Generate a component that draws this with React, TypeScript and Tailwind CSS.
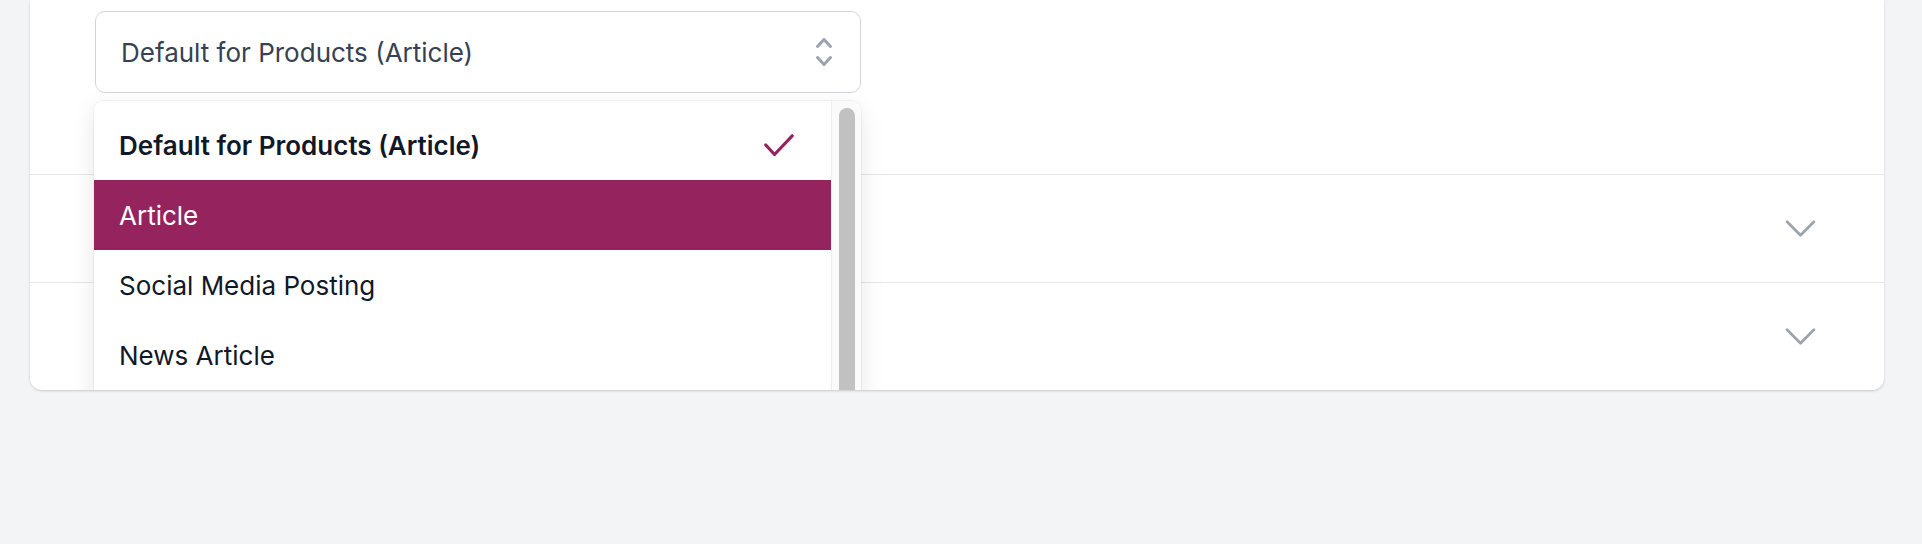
import React from "react";

const options = [
    { name: "Default for Products (Article)", selected: true },
    { name: "Article", active: true },
    { name: "Social Media Posting" },
    { name: "News Article" },
    { name: "Blog Posting" },
];

// heroicons mini chevron-up-down
const ChevronUpDown = () => (
    <svg viewBox="0 0 20 20" fill="currentColor" className="size-[40px] shrink-0 text-[#9ca3af]">
        <path
            fillRule="evenodd"
            d="M10 3a.75.75 0 01.55.24l3.25 3.5a.75.75 0 11-1.1 1.02L10 4.852 7.3 7.76a.75.75 0 01-1.1-1.02l3.25-3.5A.75.75 0 0110 3zm-3.76 9.2a.75.75 0 011.06.04l2.7 2.908 2.7-2.908a.75.75 0 111.1 1.02l-3.25 3.5a.75.75 0 01-1.1 0l-3.25-3.5a.75.75 0 01.04-1.06z"
            clipRule="evenodd"
        />
    </svg>
);

const ChevronDown = () => (
    <svg viewBox="0 0 24 24" fill="none" stroke="currentColor" strokeWidth={1.5} className="size-[43px] text-[#9ca3af]">
        <path strokeLinecap="round" strokeLinejoin="round" d="m19.5 8.25-7.5 7.5-7.5-7.5" />
    </svg>
);

const Check = () => (
    <svg viewBox="0 0 30 23" fill="none" stroke="currentColor" strokeWidth={3.2} className="h-[23px] w-[30px] shrink-0 text-[#94235e]">
        <polyline points="1.8,11 10.5,20.5 28.2,1.8" strokeLinecap="round" strokeLinejoin="round" />
    </svg>
);

export default function App() {
    return (
        <div className="min-h-screen w-full bg-[#f3f4f6] font-['Inter','Noto_Sans',sans-serif]">
            <div className="relative ml-[30px] w-[1854px] overflow-hidden rounded-b-[12px] bg-white shadow-[0_1px_3px_rgba(0,0,0,0.12),0_1px_2px_rgba(0,0,0,0.06)]">
                {/* Select section */}
                <div className="h-[175px] border-b-[1.5px] border-[#e5e7eb] pl-[65px] pt-[11px]">
                    <div className="relative w-[766px]">
                        <button className="flex h-[82px] w-full items-center justify-between rounded-[10px] border-[1.5px] border-[#d1d5db] bg-white pl-[25px] pr-[16px] text-left text-[26px] text-[#374151]">
                            <span>Default for Products (Article)</span>
                            <ChevronUpDown />
                        </button>

                        {/* Open listbox */}
                        <div className="absolute left-[-1px] top-[90px] z-10 flex h-[420px] w-[767px] overflow-hidden rounded-t-[9px] bg-white shadow-[0_8px_24px_rgba(0,0,0,0.10),0_0_0_1px_rgba(0,0,0,0.04)]">
                            <ul className="flex-1 pt-[9px]">
                                {options.map((o) => (
                                    <li
                                        key={o.name}
                                        className={
                                            o.active
                                                ? "flex h-[70px] items-center justify-between bg-[#94235e] pl-[25px] pr-[37px] text-[26px] text-white"
                                                : o.selected
                                                ? "flex h-[70px] items-center justify-between pl-[25px] pr-[37px] text-[26px] font-semibold text-[#111827]"
                                                : "flex h-[70px] items-center justify-between pl-[25px] pr-[37px] text-[26px] text-[#111827]"
                                        }
                                    >
                                        <span>{o.name}</span>
                                        {o.selected && <Check />}
                                    </li>
                                ))}
                            </ul>
                            {/* scrollbar */}
                            <div className="w-[30px] shrink-0 border-l-[1.5px] border-[#eeeeee] bg-[#fafafa] pt-[7px]">
                                <div className="mx-auto h-[400px] w-[16px] rounded-full bg-[#c1c1c1]" />
                            </div>
                        </div>
                    </div>
                </div>

                {/* Collapsed sections */}
                <div className="flex h-[108px] items-center justify-end border-b-[1.5px] border-[#e5e7eb] pr-[62px]">
                    <ChevronDown />
                </div>
                <div className="flex h-[107px] items-center justify-end pr-[62px]">
                    <ChevronDown />
                </div>
            </div>
        </div>
    );
}
